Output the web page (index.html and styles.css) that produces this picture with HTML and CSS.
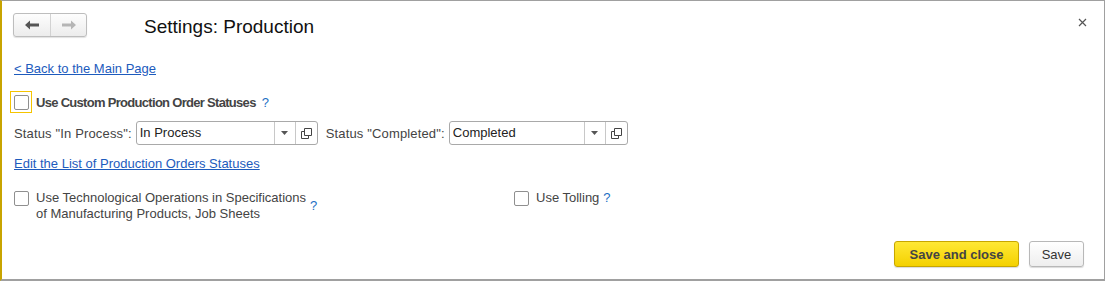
FILE: index.html
```html
<!DOCTYPE html>
<html>
<head>
<meta charset="utf-8">
<link rel="stylesheet" href="styles.css">
</head>
<body>
<div class="window">
  <div class="header">
    <div class="nav">
      <button class="nav-btn"><svg width="16" height="10" viewBox="0 0 16 10"><path d="M1 5 L6 0.5 L6 3.5 L15 3.5 L15 6.5 L6 6.5 L6 9.5 Z" fill="#555"/></svg></button>
      <button class="nav-btn"><svg width="16" height="10" viewBox="0 0 16 10"><path d="M15 5 L10 0.5 L10 3.5 L1 3.5 L1 6.5 L10 6.5 L10 9.5 Z" fill="#b5b5b5"/></svg></button>
    </div>
    <div class="title">Settings: Production</div>
    <div class="close"><svg width="9" height="9" viewBox="0 0 9 9"><path d="M1 1 L8 8 M8 1 L1 8" stroke="#555" stroke-width="1.2"/></svg></div>
  </div>
  <div class="content">
    <a class="link back" href="#">&lt; Back to the Main Page</a>
    <div class="row custom">
      <span class="focus"><span class="cb"></span></span>
      <span class="bold-label">Use Custom Production Order Statuses</span>
      <span class="q qc">?</span>
    </div>
    <div class="row fields">
      <span class="label">Status "In Process":</span>
      <div class="field f1">
        <span class="value">In Process</span>
        <span class="drop"><svg width="7" height="4" viewBox="0 0 7 4"><path d="M0 0 L7 0 L3.5 4 Z" fill="#555"/></svg></span>
        <span class="open"><svg width="11" height="11" viewBox="0 0 11 11"><path d="M3.5 0.5 H10.5 V7.5 H3.5 Z M3.5 3.5 H0.5 V10.5 H7.5 V7.5" fill="none" stroke="#444" stroke-width="1"/></svg></span>
      </div>
      <span class="label l2">Status "Completed":</span>
      <div class="field f2">
        <span class="value">Completed</span>
        <span class="drop"><svg width="7" height="4" viewBox="0 0 7 4"><path d="M0 0 L7 0 L3.5 4 Z" fill="#555"/></svg></span>
        <span class="open"><svg width="11" height="11" viewBox="0 0 11 11"><path d="M3.5 0.5 H10.5 V7.5 H3.5 Z M3.5 3.5 H0.5 V10.5 H7.5 V7.5" fill="none" stroke="#444" stroke-width="1"/></svg></span>
      </div>
    </div>
    <a class="link edit" href="#">Edit the List of Production Orders Statuses</a>
    <div class="row options">
      <div class="opt opt1">
        <span class="cb"></span>
        <span class="label multi">Use Technological Operations in Specifications<br>of Manufacturing Products, Job Sheets</span>
        <span class="q q1">?</span>
      </div>
      <div class="opt opt2">
        <span class="cb"></span>
        <span class="label">Use Tolling</span>
        <span class="q">?</span>
      </div>
    </div>
    <div class="footer">
      <button class="btn primary">Save and close</button>
      <button class="btn">Save</button>
    </div>
  </div>
</div>
</body>
</html>
```
FILE: styles.css
```css
html, body { margin: 0; padding: 0; background: #fff; }
body { font-family: Arial, "Liberation Sans", sans-serif; font-size: 13px; color: #444; }
.window {
  width: 1102px; height: 278px;
  border-top: 1px solid #a0a0a0;
  border-left: 2px solid #c8a400;
  border-right: 1px solid #a0a0a0;
  border-bottom: 2px solid #a0a0a0;
  box-sizing: content-box;
  position: relative;
  display: flex; flex-direction: column;
}
.header { display: flex; align-items: flex-start; height: 50px; }
.nav {
  margin: 12px 0 0 11px;
  display: flex; height: 22px;
  border: 1px solid #bdbdbd; border-radius: 3px;
  background: linear-gradient(#fdfdfd, #ececec);
  box-shadow: 0 1px 1px rgba(0,0,0,0.12);
}
.nav-btn {
  width: 36px; height: 22px; padding: 0; border: 0; background: transparent;
  display: flex; align-items: center; justify-content: center;
}
.nav-btn + .nav-btn { border-left: 1px solid #d2d2d2; }
.title { margin: 14px 0 0 57px; font-size: 19px; color: #111; line-height: 24px; }
.close { position: absolute; right: 17px; top: 17px; width: 9px; height: 9px; }
.close svg { display: block; }
.content { padding: 0 0 0 12px; display: flex; flex-direction: column; flex: 1; }
.link { color: #1d5bbd; text-decoration: underline; line-height: 16px; align-self: flex-start; }
.back { margin-top: 10px; }
.row { display: flex; align-items: center; }
.custom { margin-top: 14px; height: 22px; margin-left: -4px; }
.focus {
  width: 20px; height: 20px; border: 1px solid #f5c400;
  display: flex; align-items: center; justify-content: center;
}
.cb {
  width: 13px; height: 13px; border: 1px solid #8f8f8f; border-radius: 2px; background: #fff;
  display: inline-block; flex: none;
}
.bold-label { font-weight: bold; color: #444; margin-left: 4px; letter-spacing: -0.7px; }
.q { color: #1d6fc4; font-size: 13px; margin-left: 4px; }
.qc { margin-left: 6px; }
.fields { margin-top: 8px; height: 24px; }
.label { color: #444; }
.fields .label { letter-spacing: 0.15px; }
.field {
  margin-left: 4px; height: 22px; border: 1px solid #a9a9a9; border-radius: 3px;
  display: flex; align-items: stretch; background: #fff;
}
.f1 { width: 180px; }
.f2 { width: 177px; }
.value { flex: 1; padding-left: 3px; line-height: 22px; color: #222; }
.drop { width: 20px; border-left: 1px solid #c8c8c8; display: flex; align-items: center; justify-content: center; }
.open { width: 21px; border-left: 1px solid #c8c8c8; display: flex; align-items: center; justify-content: center; }
.l2 { margin-left: 8px; }
.edit { margin-top: 11px; }
.options { margin-top: 18px; align-items: flex-start; }
.opt { display: flex; align-items: flex-start; }
.opt .cb { margin-top: 1px; }
.opt .label { margin-left: 7px; line-height: 16px; }
.opt1 { width: 500px; }
.q1 { margin-top: 8px; margin-left: 4px; }
.footer { margin-top: auto; margin-bottom: 12px; display: flex; justify-content: flex-end; gap: 10px; padding-right: 20px; }
.btn {
  height: 26px; padding: 0 14px; font-family: Arial, "Liberation Sans", sans-serif; font-size: 13px;
  border: 1px solid #b8b8b8; border-radius: 3px; background: linear-gradient(#ffffff, #eeeeee);
  color: #333; box-shadow: 0 1px 1px rgba(0,0,0,0.15);
}
.btn.primary {
  width: 125px; font-weight: bold; color: #444; border-color: #c7a600;
  background: linear-gradient(#ffe835, #f4d100);
}
.btn:not(.primary) { width: 55px; padding: 0; }
```
